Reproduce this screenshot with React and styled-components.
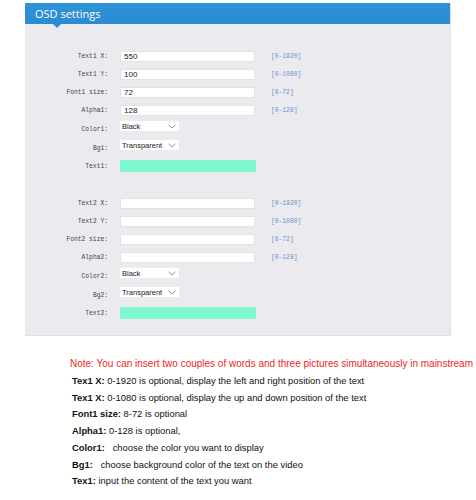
import React from 'react';
import styled, { createGlobalStyle } from 'styled-components';

const GlobalStyle = createGlobalStyle`
  body {
    margin: 0;
    background: #fff;
    font-family: "Liberation Sans", Arial, sans-serif;
  }
`;

const group1 = [
  { label: 'Text1 X:', value: '550', range: '[0-1920]' },
  { label: 'Text1 Y:', value: '100', range: '[0-1080]' },
  { label: 'Font1 size:', value: '72', range: '[8-72]' },
  { label: 'Alpha1:', value: '128', range: '[0-128]' },
];

const group2 = [
  { label: 'Text2 X:', value: '', range: '[0-1920]' },
  { label: 'Text2 Y:', value: '', range: '[0-1080]' },
  { label: 'Font2 size:', value: '', range: '[8-72]' },
  { label: 'Alpha2:', value: '', range: '[0-128]' },
];

const notes = [
  { key: 'Tex1 X:', text: ' 0-1920 is optional, display the left and right position of the text' },
  { key: 'Tex1 X:', text: ' 0-1080 is optional, display the up and down position of the text' },
  { key: 'Font1 size:', text: ' 8-72 is optional' },
  { key: 'Alpha1:', text: ' 0-128 is optional,' },
  { key: 'Color1:', text: '\u00a0\u00a0\u00a0choose the color you want to display' },
  { key: 'Bg1:', text: '\u00a0\u00a0\u00a0choose background color of the text on the video' },
  { key: 'Tex1:', text: ' input the content of the text you want' },
];

const Chevron = () => (
  <svg width="8" height="5" viewBox="0 0 8 5">
    <path d="M0.5 0.8 L4 4 L7.5 0.8" fill="none" stroke="#8a8a8a" strokeWidth="0.9" />
  </svg>
);

const TextRow = ({ label, value, range, space }) => (
  <Row $space={space}>
    <Label>{label}</Label>
    <Input>{value}</Input>
    <Range>{range}</Range>
  </Row>
);

const SelectRow = ({ label, value, space }) => (
  <Row $space={space}>
    <Label $drop>{label}</Label>
    <Select>
      <span>{value}</span>
      <Chevron />
    </Select>
  </Row>
);

const ColorRow = ({ label, space }) => (
  <Row $space={space}>
    <Label>{label}</Label>
    <Swatch />
  </Row>
);

const Group = ({ fields, n, first }) => (
  <>
    {fields.map((f, i) => (
      <TextRow key={f.label} {...f} space={i === 0 ? first : 7} />
    ))}
    <SelectRow label={`Color${n}:`} value="Black" space={5} />
    <SelectRow label={`Bg${n}:`} value="Transparent" space={9} />
    <ColorRow label={`Text${n}:`} space={10} />
  </>
);

const App = () => (
  <>
    <GlobalStyle />
    <Page>
      <Panel>
        <Header>OSD settings</Header>
        <Body>
          <Group fields={group1} n={1} first={0} />
          <Group fields={group2} n={2} first={26} />
        </Body>
      </Panel>
      <Notes>
        <NoteTitle>Note: You can insert two couples of words and three pictures simultaneously in mainstream</NoteTitle>
        {notes.map((n, i) => (
          <NoteLine key={i}>
            <b>{n.key}</b>
            {n.text}
          </NoteLine>
        ))}
      </Notes>
    </Page>
  </>
);

const Page = styled.div`
  width: 476px;
  height: 500px;
  overflow: hidden;
  padding-top: 3px;
  box-sizing: border-box;
`;

const Panel = styled.div`
  width: 426px;
  margin-left: 25px;
  background: #ebebef;
  border-right: 1px solid #e0e0e4;
  border-bottom: 1px solid #e0e0e4;
  box-sizing: border-box;
`;

const Header = styled.div`
  position: relative;
  height: 21px;
  background: linear-gradient(#2f93d8, #2a8cd3);
  color: #fff;
  font-family: "Open Sans", sans-serif;
  font-size: 11px;
  line-height: 21px;
  padding-left: 10px;

  &::after {
    content: '';
    position: absolute;
    left: 28px;
    bottom: -4px;
    border-left: 4px solid transparent;
    border-right: 4px solid transparent;
    border-top: 4px solid #2a8cd3;
  }
`;

const Body = styled.div`
  padding: 27px 0 16px;
`;

const Row = styled.div`
  display: flex;
  align-items: center;
  margin-top: ${p => p.$space}px;
`;

const Label = styled.div`
  width: 83px;
  margin-right: 12px;
  text-align: right;
  font-family: "Liberation Mono", monospace;
  font-size: 6.3px;
  color: #444;
  position: relative;
  top: ${p => (p.$drop ? 3 : 0)}px;
`;

const Input = styled.div`
  width: 135px;
  height: 11px;
  background: #fff;
  border: 1px solid #e2e2e2;
  box-sizing: border-box;
  font-size: 8px;
  line-height: 9px;
  padding-left: 3px;
  color: #222;
`;

const Range = styled.div`
  margin-left: 16px;
  font-family: "Liberation Mono", monospace;
  font-size: 6.3px;
  color: #6b90d4;
`;

const Select = styled.div`
  width: 59px;
  height: 10px;
  background: #fff;
  box-sizing: border-box;
  display: flex;
  align-items: center;
  justify-content: space-between;
  padding: 0 3px 0 2px;
  font-size: 7.5px;
  color: #222;
`;

const Swatch = styled.div`
  width: 136px;
  height: 12px;
  background: #7ef8cf;
`;

const Notes = styled.div`
  padding: 19px 0 0 70px;
  white-space: nowrap;
`;

const NoteTitle = styled.div`
  color: #ec1f1f;
  font-size: 10px;
  line-height: 18px;
`;

const NoteLine = styled.div`
  padding-left: 2px;
  font-size: 9.4px;
  line-height: 16.7px;
  color: #111;

  b {
    font-weight: 700;
  }
`;

export default App;
